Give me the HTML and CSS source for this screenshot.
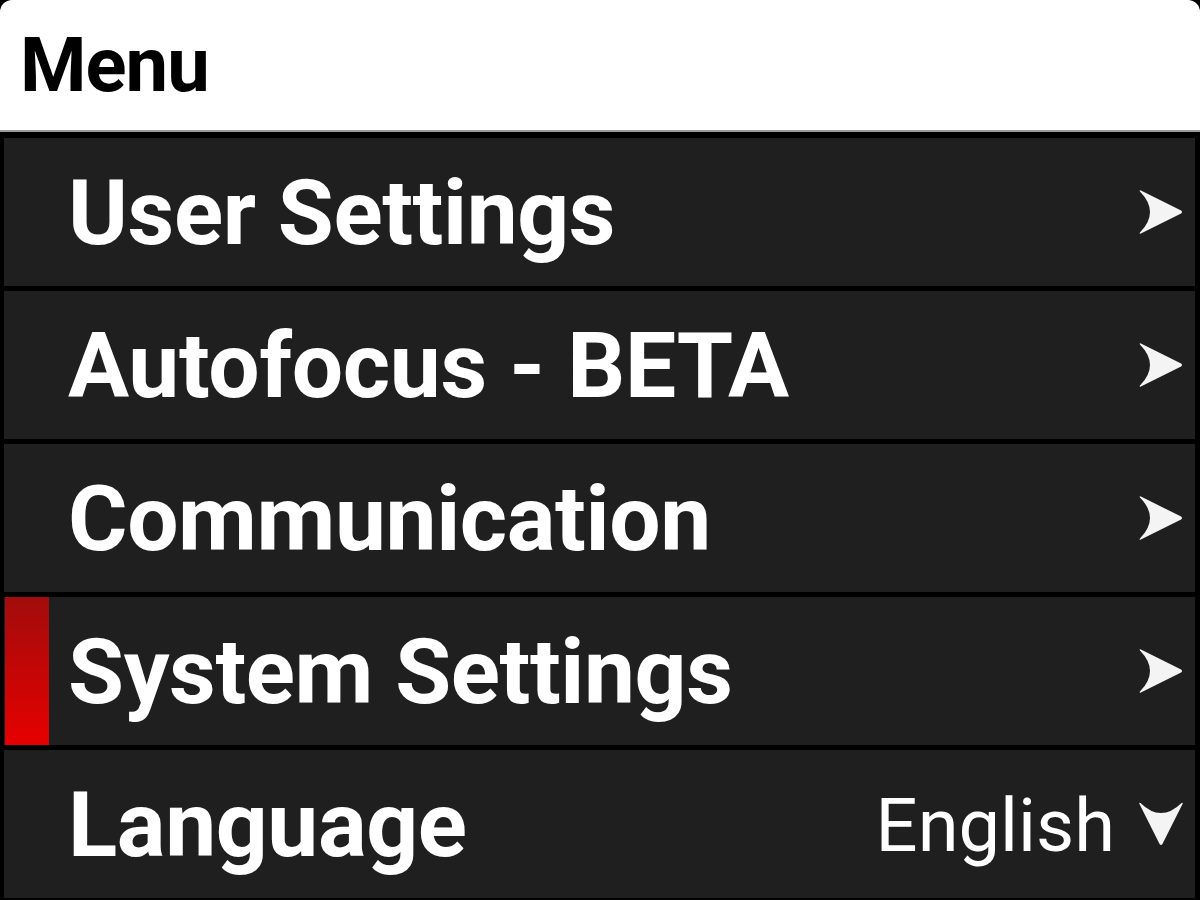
FILE: index.html
```html
<!DOCTYPE html>
<html>
<head>
<meta charset="utf-8">
<link rel="stylesheet" href="styles.css">
</head>
<body>
<div class="frame">
  <header class="header"><h1 class="title">Menu</h1></header>
  <ul class="menu">
    <li class="row"><span class="mark"></span><span class="label">User Settings</span>
      <svg class="chev" viewBox="0 0 46 48"><path d="M2 1.5 L44 22.5 Q46 24 44 25.5 L2 46.5 Q0 47.5 1 45.5 Q22 24 1 2.5 Q0 0.5 2 1.5 Z"/></svg></li>
    <li class="row"><span class="mark"></span><span class="label beta">Autofocus - BETA</span>
      <svg class="chev" viewBox="0 0 46 48"><path d="M2 1.5 L44 22.5 Q46 24 44 25.5 L2 46.5 Q0 47.5 1 45.5 Q22 24 1 2.5 Q0 0.5 2 1.5 Z"/></svg></li>
    <li class="row"><span class="mark"></span><span class="label">Communication</span>
      <svg class="chev" viewBox="0 0 46 48"><path d="M2 1.5 L44 22.5 Q46 24 44 25.5 L2 46.5 Q0 47.5 1 45.5 Q22 24 1 2.5 Q0 0.5 2 1.5 Z"/></svg></li>
    <li class="row selected"><span class="mark"></span><span class="label">System Settings</span>
      <svg class="chev" viewBox="0 0 46 48"><path d="M2 1.5 L44 22.5 Q46 24 44 25.5 L2 46.5 Q0 47.5 1 45.5 Q22 24 1 2.5 Q0 0.5 2 1.5 Z"/></svg></li>
    <li class="row"><span class="mark"></span><span class="label">Language</span>
      <span class="value">English</span>
      <svg class="chev down" viewBox="0 0 46 48"><path d="M2 1.5 L44 22.5 Q46 24 44 25.5 L2 46.5 Q0 47.5 1 45.5 Q22 24 1 2.5 Q0 0.5 2 1.5 Z"/></svg></li>
  </ul>
</div>
</body>
</html>
```
FILE: styles.css
```css
html, body {
  margin: 0;
  padding: 0;
  background: #000;
}
.frame {
  width: 1200px;
  height: 900px;
  background: #000;
  display: flex;
  flex-direction: column;
  font-family: Roboto, "Liberation Sans", sans-serif;
  overflow: hidden;
}
.header {
  height: 132px;
  background: #fff;
  border-radius: 12px 12px 0 0;
  border-bottom: 2px solid #9a9a9a;
  display: flex;
  align-items: center;
  padding-left: 20px;
  box-sizing: border-box;
  margin-bottom: 6px;
}
.title {
  margin: 0;
  font-size: 76px;
  font-weight: 700;
  color: #000;
  letter-spacing: -1px;
  line-height: 1;
}
.menu {
  list-style: none;
  margin: 0;
  padding: 0 5px 0 4px;
  display: flex;
  flex-direction: column;
  gap: 5px;
}
.row {
  height: 148px;
  background: #1f1f1f;
  display: flex;
  align-items: center;
  color: #fff;
}
.mark {
  width: 44px;
  align-self: stretch;
  margin-left: 1px;
  margin-right: 19px;
}
.selected .mark {
  background: linear-gradient(#a20c0c, #e60000);
}
.label {
  font-size: 91px;
  font-weight: 700;
  line-height: 1;
  flex: 1;
  letter-spacing: -0.4px;
  padding-top: 2px;
}
.label.beta {
  letter-spacing: -0.3px;
}
.value {
  font-size: 74px;
  font-weight: 400;
  line-height: 1;
  margin-right: 24px;
  padding-top: 4px;
}
.chev {
  width: 44px;
  height: 46px;
  fill: #f4f4f4;
  margin-right: 12px;
}
.chev.down {
  transform: rotate(90deg);
}
```
